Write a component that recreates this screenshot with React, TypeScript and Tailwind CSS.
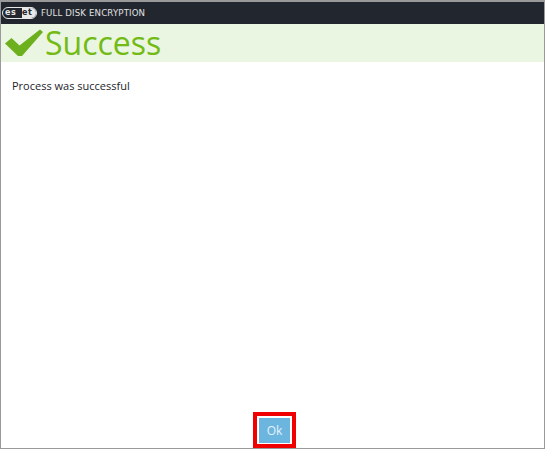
function EsetLogo() {
  return (
    <div className="flex h-[12px] w-[35px] items-stretch overflow-hidden rounded-[6px] border-[1.5px] border-[#e8e8e8] font-['DejaVu_Sans',sans-serif] text-[8px] font-bold leading-[9px]">
      <span className="w-[19px] pl-[2px] tracking-[0.5px] text-[#e8e8e8]">es</span>
      <span className="flex-1 bg-[#e8e8e8] tracking-[0.5px] text-[#22272f]">et</span>
    </div>
  );
}

export default function App() {
  return (
    <div className="flex h-[449px] w-[545px] flex-col border-x border-b border-t-2 border-[#9a9a9a] bg-white font-['Open_Sans',sans-serif]">
      <div className="flex h-[22px] items-center gap-[4px] bg-[#22272f] pl-[1px]">
        <EsetLogo />
        <span className="whitespace-nowrap font-['DejaVu_Sans',sans-serif] text-[8.6px] uppercase leading-none tracking-[0.15px] text-[#e0e0e0]">
          Full Disk Encryption
        </span>
      </div>
      <div className="flex h-[38px] items-center bg-[#eaf5e2] pl-[4px]">
        <svg width="40" height="30" viewBox="0 0 40 30" className="shrink-0">
          <path d="M0 15.5 L6.5 10 L14.5 17.5 L35 1.5 L38 4 L17 28 L13 28 Z" fill="#6db01e" />
        </svg>
        <span className="text-[32px] leading-none text-[#72bb14]">Success</span>
      </div>
      <div className="flex-1 pl-[11px] pt-[16px] text-[11px] leading-[15px] text-[#1d1d2b]">
        Process was successful
      </div>
      <div className="flex justify-center pl-[4px]">
        <div className="border-4 border-[#f00000] px-[2px] pb-[1px] pt-[2px]">
          <button className="block h-[25px] w-[31px] bg-[#6cb5de] text-[12px] text-[#e4f3fb]">Ok</button>
        </div>
      </div>
    </div>
  );
}
